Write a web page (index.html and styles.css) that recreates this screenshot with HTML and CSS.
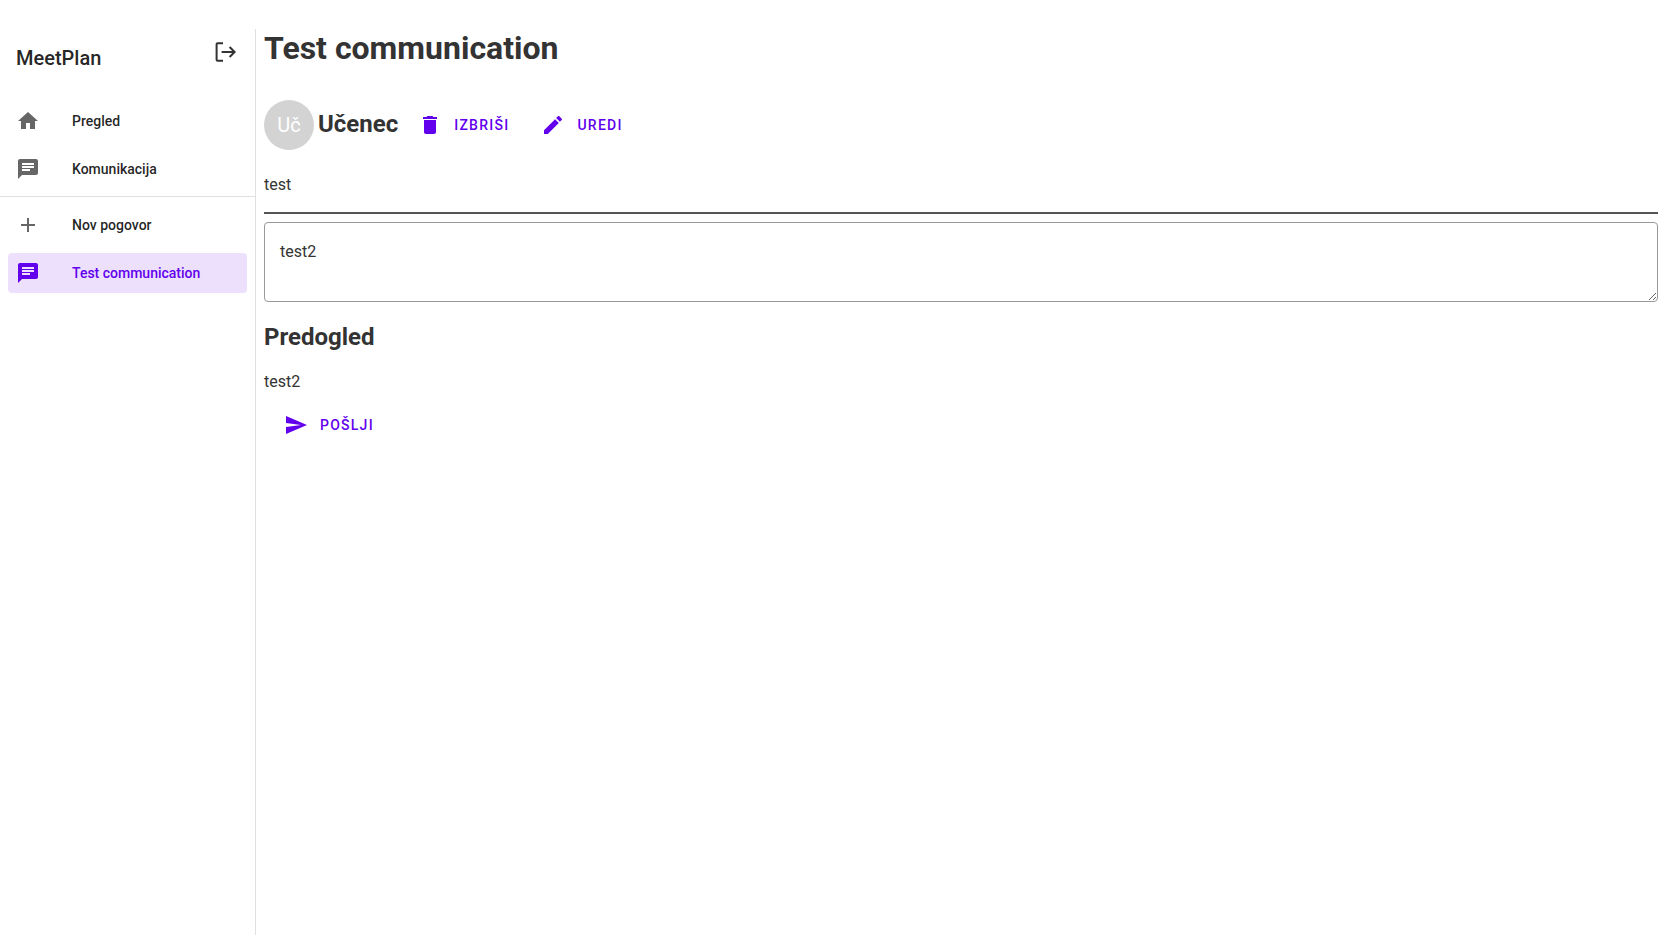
FILE: index.html
```html
<!DOCTYPE html>
<html lang="sl">
<head>
<meta charset="utf-8">
<title>MeetPlan</title>
<link rel="stylesheet" href="styles.css">
</head>
<body>
<div class="app">
  <aside class="sidebar">
    <div class="brand">
      <span class="brand-name">MeetPlan</span>
      <button class="icon-btn" aria-label="Odjava">
        <svg viewBox="0 0 24 24" class="logout"><path d="M10 3.2H4.6a1 1 0 0 0-1 1v15.6a1 1 0 0 0 1 1H10" /><path d="M8.6 12H21.5M16.6 7l5 5-5 5" /></svg>
      </button>
    </div>
    <nav class="nav">
      <a class="item"><svg class="icon" viewBox="0 0 24 24"><path d="M10 20v-6h4v6h5v-8h3L12 3 2 12h3v8z"/></svg><span>Pregled</span></a>
      <a class="item"><svg class="icon" viewBox="0 0 24 24"><path d="M20 2H4c-1.1 0-2 .9-2 2v18l4-4h14c1.100 0 2-.9 2-2V4c0-1.100-.9-2-2-2zM6 9h12v2H6V9zm8 5H6v-2h8v2zm4-6H6V6h12v2z"/></svg><span>Komunikacija</span></a>
    </nav>
    <hr class="divider">
    <nav class="nav">
      <a class="item"><svg class="icon" viewBox="0 0 24 24"><path d="M19 13h-6v6h-2v-6H5v-2h6V5h2v6h6v2z"/></svg><span>Nov pogovor</span></a>
      <a class="item active"><svg class="icon" viewBox="0 0 24 24"><path d="M20 2H4c-1.100 0-2 .9-2 2v18l4-4h14c1.100 0 2-.9 2-2V4c0-1.100-.9-2-2-2zM6 9h12v2H6V9zm8 5H6v-2h8v2zm4-6H6V6h12v2z"/></svg><span>Test communication</span></a>
    </nav>
  </aside>
  <main class="main">
    <h1 class="title">Test communication</h1>
    <div class="author">
      <div class="avatar">Uč</div>
      <h2 class="author-name">Učenec</h2>
      <button class="btn btn-delete"><svg class="btn-icon" viewBox="0 0 24 24"><path d="M6 19c0 1.100.9 2 2 2h8c1.100 0 2-.9 2-2V7H6v12zM19 4h-3.500l-1-1h-5l-1 1H5v2h14V4z"/></svg><span>Izbriši</span></button>
      <button class="btn btn-edit"><svg class="btn-icon" viewBox="0 0 24 24"><path d="M3 17.250V21h3.750L17.810 9.940l-3.750-3.750L3 17.250zM20.710 7.040c.39-.39.39-1.020 0-1.410l-2.340-2.340c-.39-.39-1.020-.39-1.410 0l-1.830 1.830 3.750 3.750 1.830-1.830z"/></svg><span>Uredi</span></button>
    </div>
    <input class="subject" type="text" value="test">
    <textarea class="body-field">test2</textarea>
    <h2 class="preview-title">Predogled</h2>
    <p class="preview-text">test2</p>
    <button class="btn btn-send"><svg class="send-icon" viewBox="0 0 24 24"><path d="M2.010 21L23 12 2.010 3 2 10l15 2-15 2z"/></svg><span>Pošlji</span></button>
  </main>
</div>
</body>
</html>
```
FILE: styles.css
```css
* { box-sizing: border-box; }
html, body { margin: 0; height: 100%; background: #fff; }
body {
  font-family: Roboto, "Liberation Sans", sans-serif;
  color: #333;
  overflow: hidden;
}
.app { display: flex; height: 935px; }
.sidebar {
  width: 256px;
  flex: none;
  margin-top: 29px;
  border-right: 1px solid #e0e0e0;
}
.brand {
  display: flex;
  align-items: flex-start;
  justify-content: space-between;
  height: 72px;
  padding: 0 18px 0 16px;
}
.brand-name {
  margin-top: 16px;
  font-size: 20px;
  line-height: 26px;
  font-weight: 500;
  color: rgba(0, 0, 0, .87);
}
.icon-btn {
  border: 0;
  padding: 0;
  margin-top: 11px;
  width: 24px;
  height: 24px;
  background: none;
  display: block;
}
.logout {
  display: block;
  width: 24px;
  height: 24px;
  fill: none;
  stroke: #333;
  stroke-width: 2;
}
.nav { display: flex; flex-direction: column; gap: 8px; padding: 0 8px; }
.item {
  display: flex;
  align-items: center;
  height: 40px;
  padding-left: 8px;
  border-radius: 4px;
  font-size: 14px;
  font-weight: 500;
  color: rgba(0, 0, 0, .87);
}
.icon {
  width: 24px;
  height: 24px;
  margin-right: 32px;
  fill: rgba(0, 0, 0, .6);
  flex: none;
}
.item.active { background: rgba(98, 0, 238, .12); color: #6200ee; }
.item.active .icon { fill: #6200ee; }
.divider {
  border: 0;
  border-top: 1px solid #e0e0e0;
  margin: 7px 0 8px;
}
.main { flex: 1; min-width: 0; padding: 0 8px; }
.title {
  margin: 0;
  padding-top: 29px;
  font-size: 32px;
  line-height: 38px;
  font-weight: 700;
}
.author { display: flex; align-items: center; margin-top: 33px; height: 50px; }
.avatar {
  width: 50px;
  height: 50px;
  border-radius: 50%;
  background: #d3d3d3;
  color: #fff;
  font-size: 20px;
  display: flex;
  align-items: center;
  justify-content: center;
  flex: none;
}
.author-name {
  margin: 0 0 2px 4px;
  font-size: 24px;
  font-weight: 700;
  line-height: 28px;
}
.btn {
  display: inline-flex;
  align-items: center;
  height: 36px;
  border: 0;
  background: none;
  padding: 0;
  font-family: inherit;
  font-size: 14px;
  font-weight: 500;
  letter-spacing: 1.25px;
  text-transform: uppercase;
  color: #6200ee;
}
.btn-icon { width: 24px; height: 24px; fill: #6200ee; margin-right: 12px; flex: none; }
.btn-delete { margin-left: 20px; }
.btn-edit { margin-left: 32px; }
.subject {
  display: block;
  width: 100%;
  height: 53px;
  margin-top: 11px;
  padding: 0;
  border: 0;
  border-bottom: 2px solid #555;
  outline: 0;
  background: none;
  font: 400 16px Roboto, sans-serif;
  color: #333;
  padding-bottom: 4px;
}
.body-field {
  display: block;
  width: 100%;
  height: 80px;
  margin-top: 8px;
  padding: 19px 15px;
  border: 1px solid #999;
  border-radius: 4px;
  outline: 0;
  font: 400 16px/1.2 Roboto, sans-serif;
  color: #333;
  resize: vertical;
}
.preview-title {
  margin: 21px 0 0;
  font-size: 24px;
  line-height: 28px;
  font-weight: 700;
}
.preview-text { margin: 21px 0 0; font-size: 16px; line-height: 19px; }
.btn-send { margin: 16px 0 0 20px; display: flex; }
.send-icon { width: 24px; height: 24px; fill: #6200ee; margin-right: 12px; flex: none; }
```
